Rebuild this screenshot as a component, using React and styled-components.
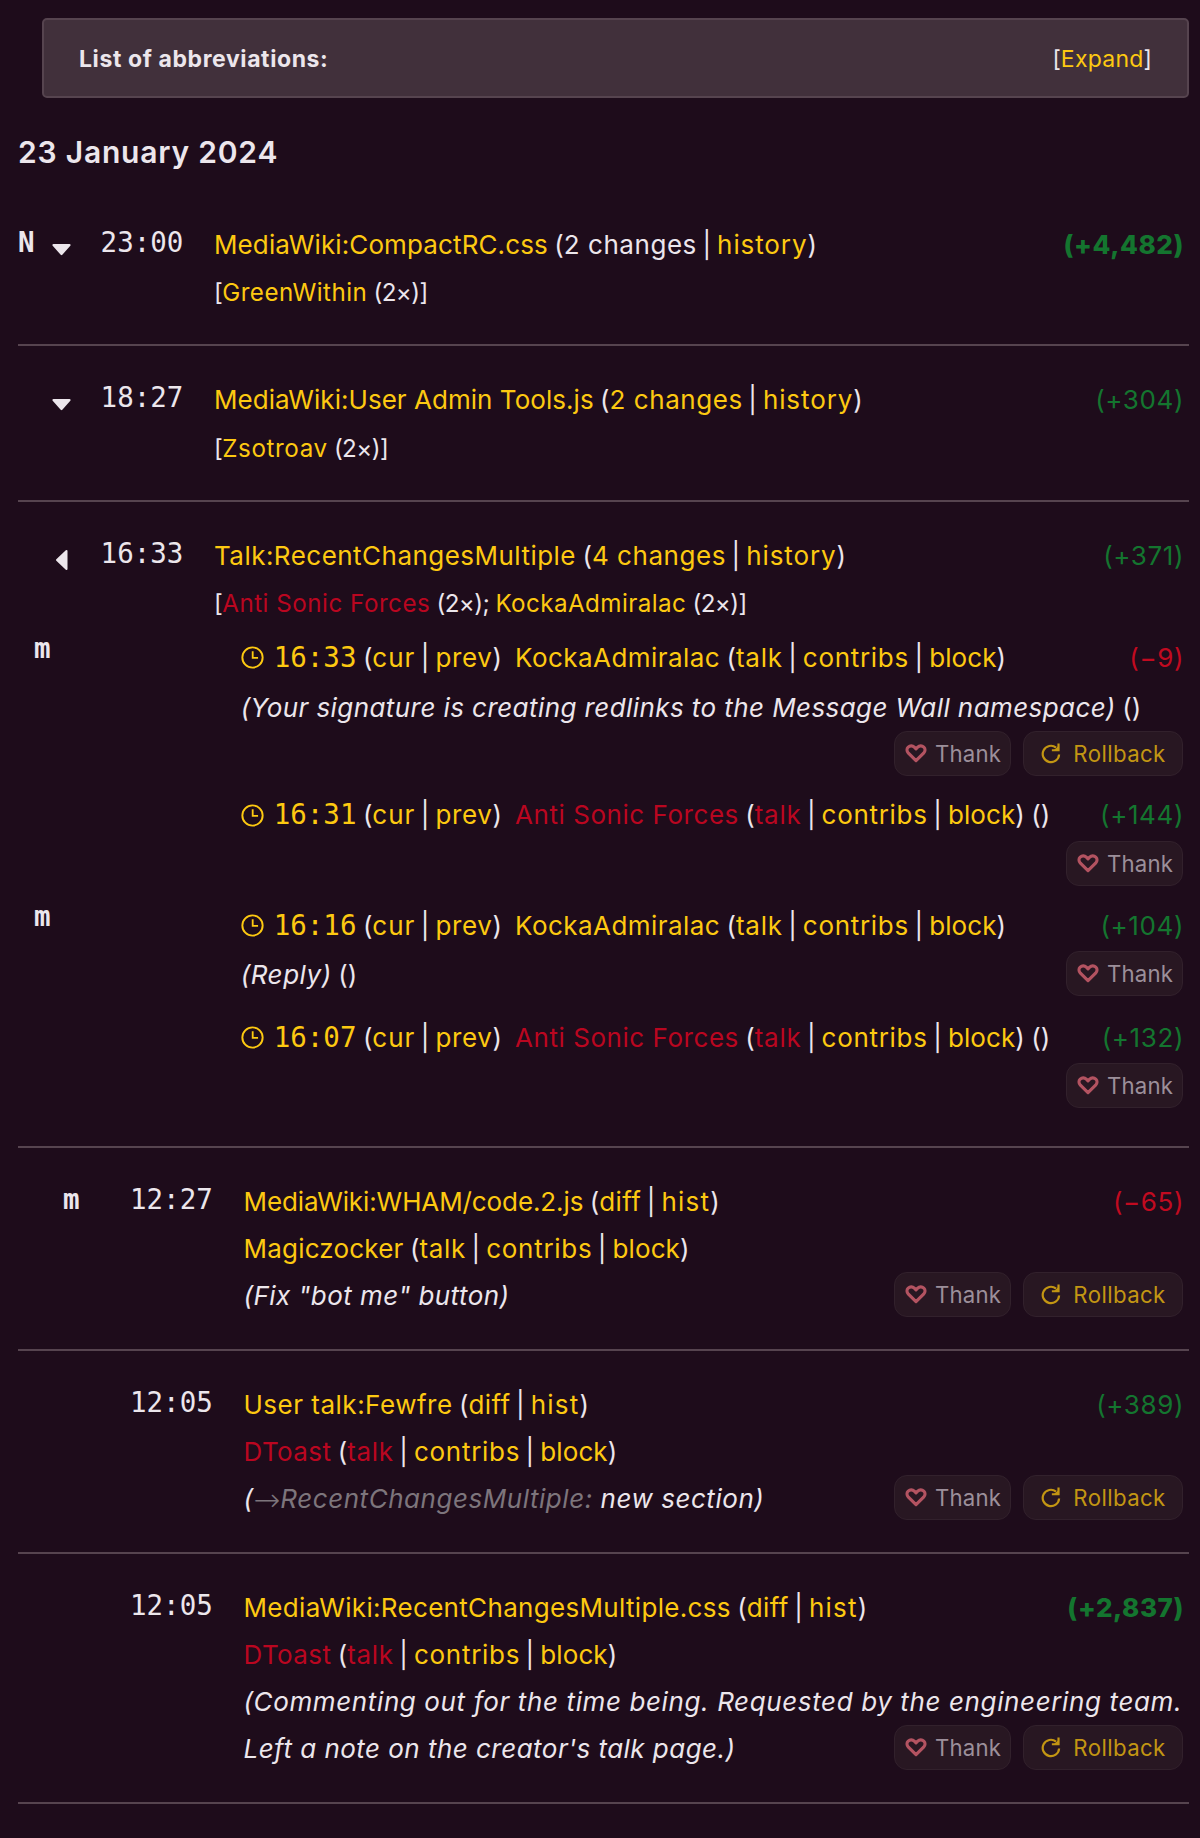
import React from "react";
import styled, { createGlobalStyle, css } from "styled-components";

const colors = {
  page: "#1e0c1b",
  panel: "#41303b",
  rule: "#56444f",
  text: "#ece6ec",
  link: "#fdc911",
  missing: "#ba0620",
  added: "#14752f",
  removed: "#c20a20",
  muted: "#7d757c",
};

const GlobalStyle = createGlobalStyle`
  * {
    box-sizing: border-box;
  }
  body {
    margin: 0;
    background: ${colors.page};
    color: ${colors.text};
    font-family: Inter, "Liberation Sans", sans-serif;
    font-size: 26px;
    line-height: 47.2px;
  }
`;

const ClockIcon = () => (
  <Clock viewBox="0 0 24 24" fill="none" stroke="currentColor">
    <circle cx="12" cy="12" r="10.6" strokeWidth="2" />
    <path d="M12.2 5.6v6.8h5.6" strokeWidth="1.9" />
  </Clock>
);

const HeartIcon = () => (
  <Heart viewBox="0 0 22 19" fill="none" stroke="#b35361" strokeWidth="3.2">
    <path
      d="M11 16.6 3.4 9.2C1.6 7.2 1.6 4.6 3.2 3.1 5 1.5 7.6 1.6 9.3 3.2L11 4.8l1.7-1.6c1.7-1.6 4.3-1.7 6.1-.1 1.6 1.5 1.6 4.1-.2 6.1Z"
      strokeLinejoin="round"
    />
  </Heart>
);

const RollbackIcon = () => (
  <Rollback viewBox="0 0 21 22" fill="none" stroke="currentColor">
    <path d="M15.8 4.8A8.6 8.6 0 1 0 19 12" strokeWidth="2.3" />
    <path d="M18.4 .6v7h-7" strokeWidth="2.3" />
    <path d="M18.4 3v4.6h-5z" fill="currentColor" stroke="none" />
  </Rollback>
);

const Arrow = ({ open }) => (
  <ArrowSvg viewBox="0 0 20 22" fill="#ece6ec" stroke="#ece6ec">
    {open ? (
      <path d="M14.5 2v18L5 11z" strokeWidth="2" strokeLinejoin="round" />
    ) : (
      <path d="M1.5 7h16l-8 9z" strokeWidth="2.2" strokeLinejoin="round" />
    )}
  </ArrowSvg>
);

// letter spacing for the words that are shown again and again
const spacing = {
  talk: 0.7,
  contribs: 0.7,
  block: 0.1,
  history: 0.9,
  cur: 1,
  prev: 0.6,
  diff: 0.4,
  hist: 1.2,
};

const Tools = ({ items, missing = [], plain = [] }) => (
  <>
    <Open>(</Open>
    {items.map((item, i) => (
      <React.Fragment key={item}>
        {i > 0 && <Bar>|</Bar>}
        <Word
          $ls={spacing[item] || 0.55}
          $missing={missing.includes(item)}
          $plain={plain.includes(item)}
        >
          {item}
        </Word>
      </React.Fragment>
    ))}
    <span>)</span>
  </>
);

const UserTools = ({ missing }) => (
  <Tools
    items={["talk", "contribs", "block"]}
    missing={missing ? ["talk"] : []}
  />
);

const Actions = ({ rollback }) => (
  <ActionList>
    <ThankButton>
      <HeartIcon />
      Thank
    </ThankButton>
    {rollback && (
      <RollbackButton>
        <RollbackIcon />
        Rollback
      </RollbackButton>
    )}
  </ActionList>
);

const Group = ({ flag, open, time, title, ls, tools, plain, size, bold, users, children }) => (
  <Entry>
    <GroupHead>
      <Flag>{flag}</Flag>
      <Arrow open={open} />
      <Time>{time}</Time>
      <div>
        <Line>
          <span>
            <Word $ls={ls}>{title}</Word>
            <Tools items={tools} plain={plain} />
          </span>
          <Size $bold={bold}>{size}</Size>
        </Line>
        <Users>{users}</Users>
      </div>
    </GroupHead>
    {children}
  </Entry>
);

const Change = ({ flag, time, user, ls, missing, size, removed, comment, tail, height, rollback }) => (
  <SubRow $height={height}>
    <SubFlag>{flag}</SubFlag>
    <div>
      <SubLine>
        <span>
          <TimeLink>
            <ClockIcon />
            <SubTime>{time}</SubTime>
          </TimeLink>
          <Tools items={["cur", "prev"]} />
          <SubUser $ls={ls} $missing={missing}>
            {user}
          </SubUser>
          <UserTools missing={missing} />
          {missing && <Empty>()</Empty>}
        </span>
        <Size $removed={removed}>{size}</Size>
      </SubLine>
      {comment}
      <SubBottom>
        <span>{tail}</span>
        <Actions rollback={rollback} />
      </SubBottom>
    </div>
  </SubRow>
);

const Single = ({ flag, time, title, ls, size, bold, removed, user, userLs, missing, children }) => (
  <Entry>
    <SingleGrid>
      <SingleFlag>{flag}</SingleFlag>
      <Time>{time}</Time>
      <div>
        <Line>
          <span>
            <Word $ls={ls}>{title}</Word>
            <Tools items={["diff", "hist"]} />
          </span>
          <Size $bold={bold} $removed={removed}>
            {size}
          </Size>
        </Line>
        <Line>
          <span>
            <Word $ls={userLs} $missing={missing}>
              {user}
            </Word>
            <UserTools missing={missing} />
          </span>
        </Line>
        {children}
      </div>
    </SingleGrid>
  </Entry>
);

const App = () => {
  return (
    <Page>
      <GlobalStyle />
      <Legend>
        <LegendTitle>List of abbreviations:</LegendTitle>
        <span>
          [<Word $ls={0.25}>Expand</Word>]
        </span>
      </Legend>
      <DateTitle>23 January 2024</DateTitle>

      <Group
        flag="N"
        time="23:00"
        title="MediaWiki:CompactRC.css"
        ls={0.12}
        tools={["2 changes", "history"]}
        plain={["2 changes"]}
        size="(+4,482)"
        bold
        users={
          <>
            [<Word $ls={0.45}>GreenWithin</Word> (2×)]
          </>
        }
      />
      <Group
        time="18:27"
        title="MediaWiki:User Admin Tools.js"
        ls={0.04}
        tools={["2 changes", "history"]}
        size="(+304)"
        users={
          <>
            [<Word $ls={0.6}>Zsotroav</Word> (2×)]
          </>
        }
      />
      <Group
        open
        time="16:33"
        title="Talk:RecentChangesMultiple"
        ls={0.47}
        tools={["4 changes", "history"]}
        size="(+371)"
        users={
          <>
            [
            <Word $ls={0.5} $missing>
              Anti Sonic Forces
            </Word>{" "}
            (2×); <Word $ls={0.42}>KockaAdmiralac</Word> (2×)]
          </>
        }
      >
        <SubList>
          <Change
            flag="m"
            time="16:33"
            user="KockaAdmiralac"
            ls={0.45}
            size="(−9)"
            removed
            comment={
              <SubComment>
                <Comment $ls={0.42}>
                  (Your signature is creating redlinks to the Message Wall namespace)
                </Comment>
                <Empty>()</Empty>
              </SubComment>
            }
            height={157.5}
            rollback
          />
          <Change
            time="16:31"
            user="Anti Sonic Forces"
            ls={0.55}
            missing
            size="(+144)"
            height={110.7}
          />
          <Change
            flag="m"
            time="16:16"
            user="KockaAdmiralac"
            ls={0.45}
            size="(+104)"
            tail={
              <>
                <Comment $ls={0.55}>(Reply)</Comment>
                <Empty>()</Empty>
              </>
            }
            height={112}
          />
          <Change
            time="16:07"
            user="Anti Sonic Forces"
            ls={0.55}
            missing
            size="(+132)"
            height={102.5}
          />
        </SubList>
      </Group>

      <Single
        flag="m"
        time="12:27"
        title="MediaWiki:WHAM/code.2.js"
        ls={-0.1}
        size="(−65)"
        removed
        user="Magiczocker"
        userLs={0.2}
      >
        <Bottom>
          <Comment $ls={0.43}>(Fix "bot me" button)</Comment>
          <Actions rollback />
        </Bottom>
      </Single>
      <Single
        time="12:05"
        title="User talk:Fewfre"
        ls={0.5}
        size="(+389)"
        user="DToast"
        userLs={0.4}
        missing
      >
        <Bottom>
          <Comment $ls={0.54}>
            (
            <Section>
              <SectionArrow>→</SectionArrow>
              RecentChangesMultiple:
            </Section>{" "}
            new section)
          </Comment>
          <Actions rollback />
        </Bottom>
      </Single>
      <Single
        time="12:05"
        title="MediaWiki:RecentChangesMultiple.css"
        ls={0.32}
        size="(+2,837)"
        bold
        user="DToast"
        userLs={0.4}
        missing
      >
        <Line>
          <Comment $ls={0.62}>
            (Commenting out for the time being. Requested by the engineering team.
          </Comment>
        </Line>
        <Bottom>
          <Comment $ls={0.47}>Left a note on the creator's talk page.)</Comment>
          <Actions rollback />
        </Bottom>
      </Single>
    </Page>
  );
};

const mono = css`
  font-family: "DejaVu Sans Mono", monospace;
  font-size: 27.5px;
`;

const Page = styled.main`
  width: 1200px;
  min-height: 1838px;
  padding: 18px 11px 0 18px;
`;

const Legend = styled.div`
  display: flex;
  justify-content: space-between;
  align-items: center;
  height: 80px;
  margin-left: 24px;
  padding: 3px 35px 0;
  background: ${colors.panel};
  border: 2px solid ${colors.rule};
  border-radius: 5px;
  font-size: 23px;
`;

const LegendTitle = styled.span`
  font-weight: 700;
  letter-spacing: 0.6px;
`;

const DateTitle = styled.h4`
  height: 92.7px;
  margin: 0;
  padding-top: 31px;
  font-size: 30px;
  font-weight: 600;
  line-height: 46px;
  letter-spacing: 0.8px;
`;

const Entry = styled.section`
  padding: 30px 0 29.3px;
  border-bottom: 2px solid ${colors.rule};
`;

const GroupHead = styled.div`
  display: grid;
  grid-template-columns: 34px 48.6px 113.4px minmax(0, 1fr);
  padding-right: 6px;
`;

const SingleGrid = styled.div`
  display: grid;
  grid-template-columns: 112px 113.5px minmax(0, 1fr);
  padding-right: 6px;
`;

const Flag = styled.span`
  ${mono}
  font-weight: 700;
  line-height: 43.4px;
`;

const SingleFlag = styled(Flag)`
  padding-left: 45px;
`;

const Time = styled.span`
  ${mono}
  line-height: 43.4px;
`;

const Line = styled.div`
  display: flex;
  justify-content: space-between;
  height: 47.2px;
  white-space: nowrap;
`;

const Users = styled.div`
  height: 47.2px;
  padding-top: 1px;
  font-size: 24.2px;
  letter-spacing: -0.6px;
`;

const Word = styled.span`
  color: ${({ $missing, $plain }) =>
    $missing ? colors.missing : $plain ? colors.text : colors.link};
  letter-spacing: ${({ $ls }) => $ls || 0}px;
`;

const Open = styled.span`
  margin-left: 6.4px;
`;

const Bar = styled.span`
  display: inline-block;
  width: 22px;
  margin: 0 -0.6px 0 -1.2px;
  text-align: center;
`;

const Empty = styled.span`
  margin-left: 6.5px;
`;

const Size = styled.span`
  margin-right: -1px;
  color: ${({ $removed }) => ($removed ? colors.removed : colors.added)};
  font-weight: ${({ $bold }) => ($bold ? 800 : 400)};
  letter-spacing: 0.6px;
`;

const Comment = styled.span`
  font-style: italic;
  letter-spacing: ${({ $ls }) => $ls}px;
`;

const Section = styled.span`
  color: ${colors.muted};
`;

const SectionArrow = styled.span`
  display: inline-block;
  font-family: "DejaVu Sans Light", "DejaVu Sans", sans-serif;
  font-style: normal;
  font-weight: 200;
  font-size: 32px;
  line-height: 1;
  letter-spacing: 0;
  vertical-align: -3px;
`;

const Bottom = styled.div`
  display: flex;
  justify-content: space-between;
  height: 47.2px;
`;

const SubList = styled.div`
  padding: 7.4px 6px 0 0;
`;

const SubRow = styled.div`
  display: grid;
  grid-template-columns: 222.7px minmax(0, 1fr);
  height: ${({ $height }) => $height}px;
`;

const SubFlag = styled.span`
  ${mono}
  padding-left: 16px;
  font-weight: 700;
  line-height: 28px;
`;

const SubLine = styled(Line)`
  height: 49.3px;
`;

const SubComment = styled.div`
  height: 48px;
  line-height: 49px;
  white-space: nowrap;
`;

const SubBottom = styled.div`
  display: flex;
  justify-content: space-between;
  line-height: 47px;
`;

const TimeLink = styled.span`
  color: ${colors.link};
`;

const SubTime = styled.span`
  ${mono}
  margin-left: 10px;
`;

const SubUser = styled(Word)`
  margin-left: 13px;
`;

const ActionList = styled.div`
  display: flex;
  gap: 12px;
`;

const ThankButton = styled.button`
  display: flex;
  align-items: center;
  justify-content: center;
  gap: 8px;
  width: 117px;
  height: 45px;
  padding: 0 0 0 1px;
  background: #281722;
  border: 1.5px solid #32212c;
  border-radius: 13px;
  color: #9c8f9a;
  font-family: inherit;
  font-size: 22.2px;
  letter-spacing: 0.2px;
`;

const RollbackButton = styled(ThankButton)`
  gap: 12px;
  width: 160px;
  color: #c39613;
  letter-spacing: 0.4px;
`;

const Clock = styled.svg`
  width: 23px;
  height: 23px;
  vertical-align: -2.5px;
`;

const Heart = styled.svg`
  width: 22px;
  height: 19px;
`;

const Rollback = styled.svg`
  width: 20px;
  height: 21px;
`;

const ArrowSvg = styled.svg`
  width: 20px;
  height: 22px;
  margin-top: 17px;
`;

export default App;
